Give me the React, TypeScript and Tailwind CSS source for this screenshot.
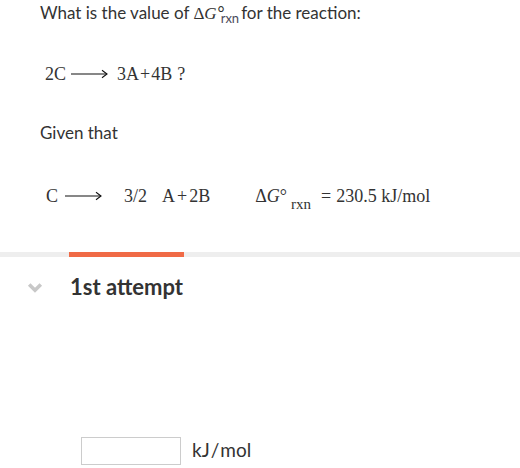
import React from "react";

function Arrow({ w = 37 }: { w?: number }) {
  return (
    <svg width={w} height="10" viewBox={`0 0 ${w} 10`} className="block">
      <line x1="0" y1="5" x2={w - 1} y2="5" stroke="#111" strokeWidth="1.1" />
      <path d={`M${w - 6} 1.3 L${w - 1} 5 L${w - 6} 8.7`} fill="none" stroke="#111" strokeWidth="1.1" />
    </svg>
  );
}

export default function App() {
  return (
    <div className="w-[520px] h-[468px] bg-white text-[#333] font-['Lato',sans-serif] overflow-hidden">
      {/* Title */}
      <div className="pl-[40px] pt-[1px] h-[25px]">
        <p className="text-[17px] leading-[24px] whitespace-nowrap">
          <span>What is the value of </span>
          <span className="font-['Liberation_Serif',serif]">Δ</span>
          <span className="font-['Liberation_Serif',serif] italic">G</span>
          <span className="inline-block leading-[10px] ml-[1px]">°</span>
          <span className="inline-block text-[13px] leading-[10px] relative top-[4px] ml-[-4px] text-[#4a4a5a]">rxn</span>
          <span className="ml-[2px]">for the reaction:</span>
        </p>
      </div>

      {/* Equation 1 */}
      <div className="mt-[37px] pl-[45px] h-[24px] text-[18px] leading-[24px] text-[#333] flex items-center font-['Liberation_Serif',serif] whitespace-nowrap">
        <span>2C</span>
        <span className="ml-[5px]"><Arrow w={37} /></span>
        <span className="ml-[9px]">3A<span className="mx-[1px]">+</span>4B</span>
        <span className="ml-[5px]">?</span>
      </div>

      {/* Given that */}
      <div className="mt-[35px] pl-[40px] h-[24px] text-[17px] leading-[24px]">Given that</div>

      {/* Equation 2 */}
      <div className="mt-[39px] pl-[46px] h-[24px] text-[18px] leading-[24px] text-[#333] flex items-center font-['Liberation_Serif',serif] whitespace-nowrap">
        <span>C</span>
        <span className="ml-[7px]"><Arrow w={37} /></span>
        <span className="ml-[22px]">3/2</span>
        <span className="ml-[15px]">A<span className="mx-[2px]">+</span>2B</span>
        <span className="ml-[45px]">Δ<i>G</i>°</span>
        <span className="ml-[4px] text-[15px] relative top-[8px]">rxn</span>
        <span className="ml-[10px]">=</span>
        <span className="ml-[5px]">230.5 kJ/mol</span>
      </div>

      {/* Progress bar */}
      <div className="mt-[44px] h-[5px] bg-[#eeeeee] flex">
        <div className="ml-[69px] w-[115px] h-[5px] bg-[#f06a46]"></div>
      </div>

      {/* Attempt header */}
      <div className="mt-[16px] h-[28px] flex items-center">
        <svg width="16" height="11" viewBox="0 0 16 11" className="ml-[27px]">
          <path d="M2.2 2.5 L8 8.3 L13.8 2.5" fill="none" stroke="#c8c8c8" strokeWidth="3.6" />
        </svg>
        <span className="ml-[27px] text-[22px] leading-[28px] font-bold text-[#333]">1st attempt</span>
      </div>

      {/* Answer input */}
      <div className="mt-[136px] h-[28px] flex items-center">
        <div className="ml-[81px] w-[100px] h-[28px] border border-[#cccccc] bg-white"></div>
        <span className="ml-[11px] text-[19px] leading-[28px] relative -top-[1px] text-[#333]">kJ<span className="mx-[1px]">/</span>mol</span>
      </div>
    </div>
  );
}
